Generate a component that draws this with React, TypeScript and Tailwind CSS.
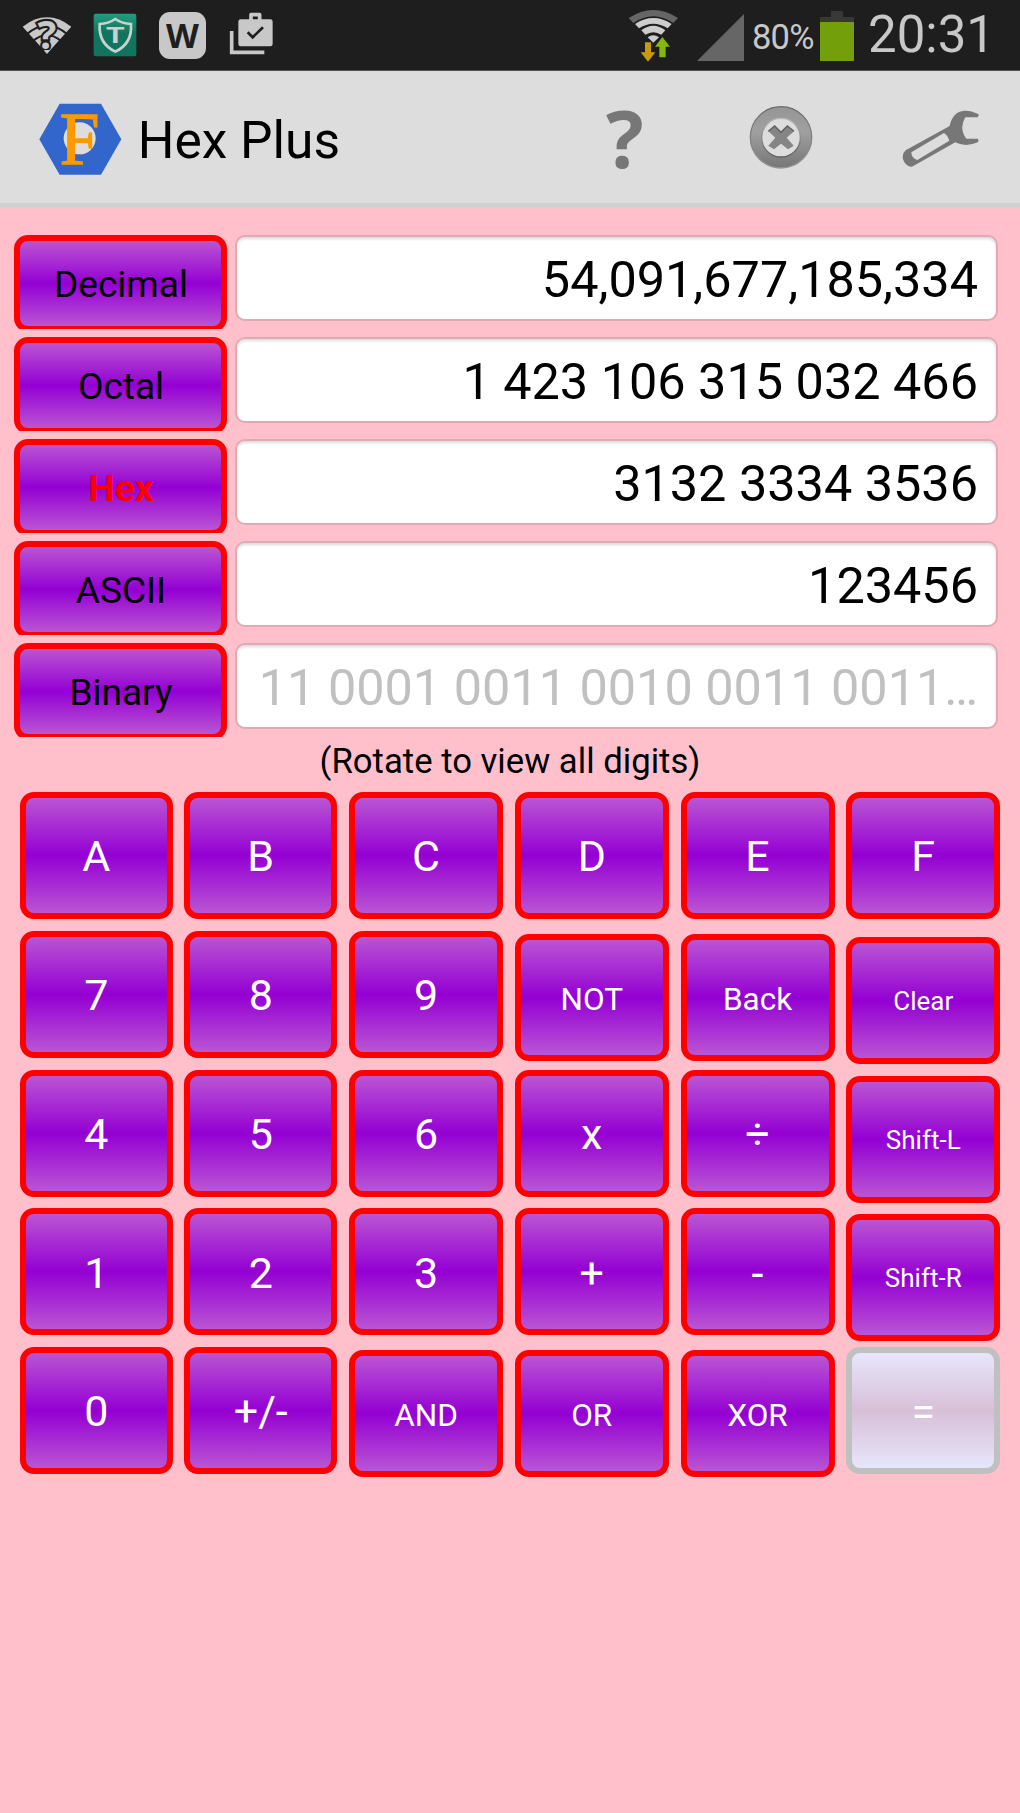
// src/App.tsx
import React from "react";
import clsx from "clsx";

interface BaseRow {
  label: string;
  value: string;
  active?: boolean;
  truncated?: boolean;
}

interface Key {
  label: string;
  size?: "md" | "sm";
  disabled?: boolean;
}

const ROWS: BaseRow[] = [
  { label: "Decimal", value: "54,091,677,185,334" },
  { label: "Octal", value: "1 423 106 315 032 466" },
  { label: "Hex", value: "3132 3334 3536", active: true },
  { label: "ASCII", value: "123456" },
  { label: "Binary", value: "11 0001 0011 0010 0011 0011…", truncated: true },
];

const KEYS: Key[] = [
  { label: "A" },
  { label: "B" },
  { label: "C" },
  { label: "D" },
  { label: "E" },
  { label: "F" },
  { label: "7" },
  { label: "8" },
  { label: "9" },
  { label: "NOT", size: "md" },
  { label: "Back", size: "md" },
  { label: "Clear", size: "sm" },
  { label: "4" },
  { label: "5" },
  { label: "6" },
  { label: "x" },
  { label: "÷" },
  { label: "Shift-L", size: "sm" },
  { label: "1" },
  { label: "2" },
  { label: "3" },
  { label: "+" },
  { label: "-" },
  { label: "Shift-R", size: "sm" },
  { label: "0" },
  { label: "+/-" },
  { label: "AND", size: "md" },
  { label: "OR", size: "md" },
  { label: "XOR", size: "md" },
  { label: "=", disabled: true },
];

const WifiUnknownIcon = () => (
  <svg viewBox="66 48 150 114" className="w-[50px] h-[38px] overflow-visible">
    <path d="M68 80 Q141 24 214 80 L141 161 Z" fill="#c8c8c8" />
    <path d="M80 103 Q141 50 202 103 M98 124 Q141 86 184 124" fill="none" stroke="#1e1e1e" strokeWidth="6" />
    <text
      x="141"
      y="146"
      textAnchor="middle"
      fill="#c8c8c8"
      stroke="#1e1e1e"
      strokeWidth="13"
      paintOrder="stroke"
      className="font-[Open_Sans] font-bold text-[118px]"
    >
      ?
    </text>
    <path d="M131 150 H151 L141 161 Z" fill="#c8c8c8" />
  </svg>
);

const ShieldIcon = () => (
  <svg viewBox="278 40 132 132" className="w-[44px] h-[44px]">
    <defs>
      <linearGradient id="shield" x1="0" y1="0" x2="0" y2="1">
        <stop offset="0" stopColor="#259a80" />
        <stop offset="0.45" stopColor="#12745f" />
        <stop offset="1" stopColor="#12745f" />
      </linearGradient>
    </defs>
    <rect x="280" y="42" width="128" height="128" rx="6" fill="url(#shield)" />
    <path d="M345 58 Q324 72 298 73 Q294 132 345 156 Q396 132 392 73 Q366 72 345 58 Z" fill="none" stroke="#c6d4cf" strokeWidth="8" />
    <text x="345" y="131" textAnchor="middle" fill="#c6d4cf" textLength="56" lengthAdjust="spacingAndGlyphs" className="font-[Roboto] font-bold text-[67px]">
      T
    </text>
  </svg>
);

const BriefcaseCheckIcon = () => (
  <svg viewBox="686 36 132 130" className="w-[44px] h-[43.300px]">
    <path d="M694 93 V157 H792" fill="none" stroke="#c8c8c8" strokeWidth="11" />
    <path d="M752 62 V44 H778 V62" fill="none" stroke="#c8c8c8" strokeWidth="11" strokeLinejoin="round" />
    <rect x="714" y="58" width="103" height="81" rx="7" fill="#c8c8c8" />
    <path d="M742 97 L757 112 L788 82" fill="none" stroke="#1e1e1e" strokeWidth="8" />
  </svg>
);

const WifiTransferIcon = () => (
  <svg viewBox="82 26 150 160" className="w-[50px] h-[53.300px]">
    <path d="M84 53 Q158 5 232 53 L218 68 Q158 28 98 68 Z" fill="#666666" />
    <path d="M103 71 Q158 35 213 71 L201 84 Q158 56 115 84 Z" fill="#cccccc" />
    <path d="M122 90 Q158 62 194 90 L182 103 Q158 88 134 103 Z" fill="#cccccc" />
    <path d="M141 111 Q158 98 175 111 L158 127 Z" fill="#cccccc" />
    <path d="M133 126 H151 V156 H164 L142 184 L120 156 H133 Z" fill="#c99b06" />
    <path d="M185 110 L208 139 H195 V171 H176 V139 H163 Z" fill="#84b80b" />
  </svg>
);

const HexLogo = () => (
  <svg viewBox="118 100 248 218" className="w-[82.700px] h-[72.700px] overflow-visible">
    <path d="M180 102 H304 L365 209 L304 315 H180 L119 209 Z" fill="#3366cc" />
    <circle cx="240" cy="206" r="48" fill="#dddddd" />
    <text
      x="180"
      y="284"
      fill="#ff9900"
      stroke="#ff9900"
      strokeWidth="4"
      textLength="119"
      lengthAdjust="spacingAndGlyphs"
      className="font-[Liberation_Serif] text-[223px]"
    >
      F
    </text>
  </svg>
);

const HelpIcon = () => (
  <svg viewBox="140 116 108 184" className="w-[36px] h-[61.300px] overflow-visible">
    <text x="140" y="294" fill="#777777" className="font-[Open_Sans] font-bold text-[237px]">
      ?
    </text>
  </svg>
);

const ExitIcon = () => (
  <svg viewBox="568 103 194 194" className="w-[64.700px] h-[64.700px]">
    <defs>
      <linearGradient id="ring" x1="0" y1="0" x2="0" y2="1">
        <stop offset="0" stopColor="#959595" />
        <stop offset="0.4" stopColor="#a0a0a0" />
        <stop offset="1" stopColor="#767676" />
      </linearGradient>
      <linearGradient id="rim" x1="0" y1="0" x2="0" y2="1">
        <stop offset="0" stopColor="#6a6a6a" />
        <stop offset="1" stopColor="#969696" />
      </linearGradient>
      <linearGradient id="innerRim" x1="0" y1="0" x2="0" y2="1">
        <stop offset="0" stopColor="#b8b8b8" />
        <stop offset="1" stopColor="#5c5c5c" />
      </linearGradient>
    </defs>
    <circle cx="664" cy="200" r="92" fill="url(#ring)" stroke="url(#rim)" strokeWidth="4" />
    <circle cx="664" cy="201" r="58" fill="#dddddd" stroke="url(#innerRim)" strokeWidth="4" />
    <path d="M664 185 L683 166 L703 182 L681 201 L702 225 L685 236 L664 219 L643 236 L626 225 L647 201 L626 182 L645 166 Z" fill="#858585" />
    <path d="M626 182 L645 166 L664 185 L683 166 L703 182" fill="none" stroke="#5e5e5e" strokeWidth="4" />
  </svg>
);

const WrenchIcon = () => (
  <svg viewBox="1026 120 232 174" className="w-[77.300px] h-[58px]">
    <path
      fillRule="evenodd"
      d="M1255 132 Q1232 121 1213 122 Q1178 125 1169 168 L1037 241 Q1024 252 1030 271 Q1039 291 1056 290 L1186 217 Q1217 233 1253 217 Q1258 211 1253 206 H1219 Q1196 176 1216 142 H1252 Q1258 138 1255 132 Z M1152 189 Q1163 195 1168 212 L1072 270 Q1054 265 1054 247 Z"
      fill="#777777"
    />
  </svg>
);

const StatusBar = () => (
  <div className="h-[70px] bg-[#1e1e1e] flex items-start text-[#c8c8c8]">
    <div className="ml-[22px] mt-4">
      <WifiUnknownIcon />
    </div>
    <div className="ml-[21px] mt-[13px]">
      <ShieldIcon />
    </div>
    <div className="ml-[22px] mt-3 w-[47px] h-[47px] pb-[2px] rounded-[11px] bg-[#c8c8c8] text-[#1e1e1e] flex items-center justify-center font-[Open_Sans] font-bold text-[34px] leading-none">
      W
    </div>
    <div className="ml-[23px] mt-3">
      <BriefcaseCheckIcon />
    </div>
    <div className="ml-auto mt-[9px]">
      <WifiTransferIcon />
    </div>
    <svg viewBox="0 0 47 47" className="ml-[19px] mt-[14px] w-[47px] h-[47px]">
      <path d="M47 0 V47 H0 Z" fill="#666666" />
    </svg>
    <span className="ml-[8px] mt-[17px] w-[68px] text-[34.500px] leading-[40px] tracking-[-0.8px] whitespace-nowrap">80%</span>
    <div className="mt-[11px] w-[34px] flex flex-col items-center">
      <div className="w-[12px] h-[6px] bg-[#383838]" />
      <div className="w-full h-[5px] bg-[#383838]" />
      <div className="w-full h-[39px] bg-[#73a00a]" />
    </div>
    <span className="ml-[14px] mt-[5px] w-[152px] text-[51px] leading-[60px] whitespace-nowrap">20:31</span>
  </div>
);

const Header = () => (
  <header className="h-[137px] bg-[#dddddd] border-t border-t-[#555055] border-b-4 border-b-[#d0d0d0] flex items-start text-black">
    <div className="ml-[39px] mt-[32px]">
      <HexLogo />
    </div>
    <h1 className="ml-[16px] mt-[40px] w-[468px] text-[51.500px] leading-[60px]">Hex Plus</h1>
    <div className="mt-[38px]">
      <HelpIcon />
    </div>
    <div className="ml-[107px] mt-[34px]">
      <ExitIcon />
    </div>
    <div className="ml-[88.500px] mt-[39px]">
      <WrenchIcon />
    </div>
  </header>
);

const ConversionRow = ({ row }: { row: BaseRow }) => (
  <div className="h-[94px] flex items-start gap-2 overflow-hidden">
    <button
      className={clsx(
        "w-[213px] h-[97px] shrink-0 rounded-[14px] border-6 bg-origin-padding pt-[2px] pl-[1px] border-[#ff0000] bg-linear-to-b/srgb from-[#ba55d3] via-[#9400d3] to-[#ba55d3] text-[37px] leading-[44px]",
        row.active ? "text-[#ff0000] font-bold" : "text-black"
      )}
    >
      {row.label}
    </button>
    <div
      className={clsx(
        "w-[763px] h-[86px] rounded-[10px] border-2 border-[#e0aab3] bg-white shadow-[inset_0_2px_3px_rgba(0,0,0,0.15)] pr-[18px] pt-[13px] text-right text-[50.400px] leading-[60px] whitespace-nowrap",
        row.truncated ? "text-[#c0c0c0]" : "text-black"
      )}
    >
      {row.value}
    </div>
  </div>
);

const KeyButton = ({ item }: { item: Key }) => (
  <button
    className={clsx(
      "h-[127px] rounded-[14px] border-6 text-white flex items-center justify-center bg-linear-to-b/srgb",
      item.disabled
        ? "border-[#c0c0c0] from-[#e6e6fa] via-[#d8bfd8] to-[#e6e6fa]"
        : "border-[#ff0000] from-[#ba55d3] via-[#9400d3] to-[#ba55d3]",
      !item.size && "pt-[2px] text-[43px]",
      item.size === "md" && "mt-[3px] pt-[4px] text-[31.500px]",
      item.size === "sm" && "mt-[6px] pt-[2px] text-[26px]"
    )}
  >
    {item.label}
  </button>
);

const App = () => {
  return (
    <div className="w-[1020px] h-[1813px] overflow-hidden bg-[#ffc0cb] font-[Roboto,sans-serif]">
      <StatusBar />
      <Header />
      <main>
        <div className="pl-[14px] pt-7 flex flex-col gap-2">
          {ROWS.map((row) => (
            <ConversionRow key={row.label} row={row} />
          ))}
        </div>
        <p className="mt-[3px] h-[52px] text-center text-[34.700px] leading-[42px] text-black">(Rotate to view all digits)</p>
        <div className="pl-5 grid grid-cols-[152.5px_153px_154px_154px_154px_154px] gap-x-[11.750px] auto-rows-[138.750px] items-start">
          {KEYS.map((item) => (
            <KeyButton key={item.label} item={item} />
          ))}
        </div>
      </main>
    </div>
  );
};

export default App;
